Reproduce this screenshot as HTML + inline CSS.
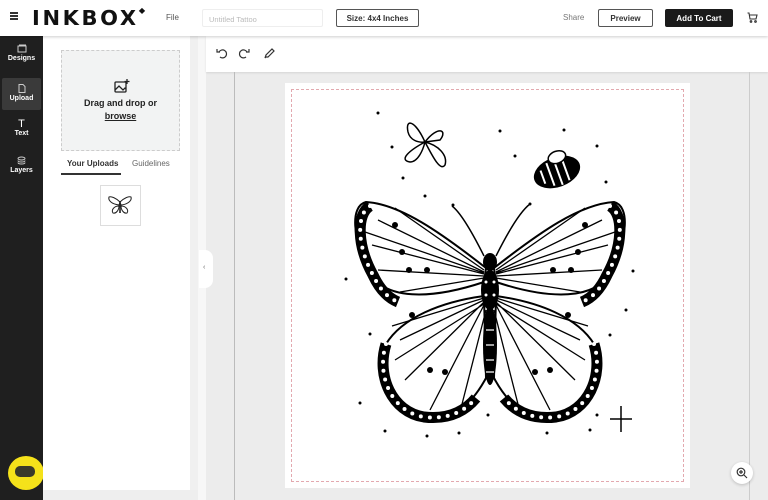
<!DOCTYPE html>
<html><head><style>
*{margin:0;padding:0;box-sizing:border-box}
body{width:768px;height:500px;overflow:hidden;font-family:"Liberation Sans",sans-serif;background:#ececec;position:relative}
.hdr{position:absolute;left:0;top:0;width:768px;height:36px;background:#fff;box-shadow:0 1px 3px rgba(0,0,0,.2);z-index:5}
.abs{position:absolute}
.side{position:absolute;left:0;top:36px;width:43px;height:464px;background:#1f1f1f}
.si{position:absolute;left:2px;width:39px;height:32px;color:#fff;font-size:7px;font-weight:bold;text-align:center}
.panel{position:absolute;left:43px;top:36px;width:147px;height:464px;background:#fff}
.btn{position:absolute;font-size:8px;font-weight:bold;text-align:center;border-radius:2px}
</style></head><body>
<div class="hdr">
 <div class="abs" style="left:10px;top:12px;width:8px;height:1.5px;background:#333;box-shadow:0 3px 0 #333,0 6px 0 #333"></div>
 <div class="abs" style="left:32px;top:6px;font-size:20px;font-weight:900;letter-spacing:2.5px;color:#111;font-family:'DejaVu Sans',sans-serif;transform:scaleX(1.05);transform-origin:left">INKBOX<span style="font-size:8px;vertical-align:top">◆</span></div>
 <div class="abs" style="left:166px;top:13px;font-size:8px;color:#555">File</div>
 <div class="abs" style="left:202px;top:9px;width:121px;height:18px;border:1px solid #eee;border-radius:2px;font-size:7.5px;color:#bbb;padding:5px 6px">Untitled Tattoo</div>
 <div class="btn" style="left:336px;top:9px;width:83px;height:18px;border:1px solid #555;padding-top:4px;color:#333">Size: 4x4 Inches</div>
 <div class="abs" style="left:563px;top:13px;font-size:8px;color:#777">Share</div>
 <div class="btn" style="left:598px;top:9px;width:55px;height:18px;border:1px solid #555;padding-top:4px;color:#333">Preview</div>
 <div class="btn" style="left:665px;top:9px;width:68px;height:18px;background:#1a1a1a;color:#fff;padding-top:5px">Add To Cart</div>
 <svg class="abs" style="left:747px;top:12px" width="11" height="11" viewBox="0 0 11 11" fill="none" stroke="#333" stroke-width="1.1"><path d="M0.5 1H2L3 7H9L10 3H2.5"/><circle cx="4" cy="9.5" r=".8"/><circle cx="8.5" cy="9.5" r=".8"/></svg>
</div>
<div class="side">
 <div class="si" style="top:8px"><svg width="10" height="9" viewBox="0 0 10 9" fill="none" stroke="#ccc"><rect x="1" y="2" width="8" height="6"/><path d="M2 1H9"/></svg><br>Designs</div>
 <div class="si" style="top:42px;background:#3a3a3a;border-radius:2px;padding-top:6px"><svg width="8" height="9" viewBox="0 0 8 9" fill="none" stroke="#ccc"><path d="M1 .5H5L7 2.5V8.5H1Z"/></svg><br>Upload</div>
 <div class="si" style="top:82px;font-size:7px"><span style="font-size:11px;font-weight:normal">T</span><br>Text</div>
 <div class="si" style="top:120px"><svg width="9" height="9" viewBox="0 0 9 9" fill="none" stroke="#ccc"><ellipse cx="4.5" cy="2.5" rx="3.5" ry="1.5"/><path d="M1 4.5c0 2 7 2 7 0M1 6.5c0 2 7 2 7 0"/></svg><br>Layers</div>
 <div class="abs" style="left:8px;top:420px;width:36px;height:34px;border-radius:50%;background:#f5e21a"></div>
 <div class="abs" style="left:15px;top:430px;width:20px;height:11px;border-radius:5px;background:#3a3a2a"></div>
</div>
<div class="panel">
 <div class="abs" style="left:18px;top:14px;width:119px;height:101px;background:#f2f3f3;border:1px dashed #ccc"></div>
 <svg class="abs" style="left:71px;top:43px" width="16" height="15" viewBox="0 0 16 15" fill="none" stroke="#222" stroke-width="1.3"><rect x="1" y="3" width="11" height="10" rx="1"/><path d="M1 11l4-4 4 4 2-2 1 1M13 0v5M10.5 2.5h5"/></svg>
 <div class="abs" style="left:18px;top:61px;width:119px;text-align:center;font-size:9px;font-weight:bold;color:#222;line-height:13px">Drag and drop or<br><u>browse</u></div>
 <div class="abs" style="left:24px;top:123px;font-size:8px;font-weight:bold;color:#333">Your Uploads</div>
 <div class="abs" style="left:18px;top:137px;width:60px;height:1.5px;background:#333"></div>
 <div class="abs" style="left:89px;top:123px;font-size:8px;color:#666">Guidelines</div>
 <div class="abs" style="left:57px;top:149px;width:41px;height:41px;border:1px solid #ddd;background:#fff"></div>
 <svg class="abs" style="left:64px;top:158px" width="26" height="22" viewBox="0 0 26 22" fill="none" stroke="#222" stroke-width="1"><path d="M13 8C9 4 4 2 2 3 1 6 4 10 12 11ZM13 8C17 4 22 2 24 3 25 6 22 10 14 11ZM12 12C7 12 4 16 6 19 9 20 12 16 12 12ZM14 12C19 12 22 16 20 19 17 20 14 16 14 12Z"/><path d="M13 7V19" stroke-width="1.6"/></svg>
</div>
<div class="abs" style="left:190px;top:36px;width:8px;height:464px;background:#f0f0f0"></div>
<div class="abs" style="left:43px;top:490px;width:155px;height:10px;background:#eee"></div>
<div class="abs" style="left:198px;top:36px;width:8px;height:464px;background:#f7f7f7"></div>
<div class="abs" style="left:199px;top:250px;width:14px;height:38px;background:#fff;border-radius:0 8px 8px 0;font-size:7px;color:#666;padding:14px 0 0 4px">‹</div>
<div class="abs" style="left:206px;top:36px;width:562px;height:36px;background:#fff;box-shadow:0 1px 2px rgba(0,0,0,.1)">
 <svg class="abs" style="left:10px;top:12px" width="62" height="11" viewBox="0 0 62 11" fill="none" stroke="#333" stroke-width="1.2"><path d="M3 4A4 4 0 1 1 4 9M1 1V4H4"/><path d="M31 4A4 4 0 1 0 30 9M33 1V4H30"/><path d="M50 9L49 10L50 7L56 1L58 3L52 9Z"/></svg>
</div>
<div class="abs" style="left:234px;top:72px;width:1px;height:428px;background:#bbb"></div>
<div class="abs" style="left:749px;top:72px;width:1px;height:428px;background:#ccc"></div>
<div class="abs" style="left:285px;top:83px;width:405px;height:405px;background:#fff"></div>
<div class="abs" style="left:291px;top:89px;width:393px;height:393px;border:1px dashed #e3a9af"></div>
<div class="abs" style="left:731px;top:462px;width:22px;height:22px;border-radius:50%;background:#fff;box-shadow:0 1px 3px rgba(0,0,0,.2)"></div>
<svg class="abs" style="left:736px;top:467px" width="12" height="12" viewBox="0 0 12 12" fill="none" stroke="#333" stroke-width="1.2"><circle cx="5" cy="5" r="3.8"/><path d="M8 8L11 11M5 3V7M3 5H7"/></svg>
<svg class="abs" style="left:0;top:0" width="768" height="500" viewBox="0 0 768 500">
<g id="wl" fill="#fff" stroke="#000" stroke-width="2">
 <path d="M486,268 C440,232 400,204 366,202 C350,206 352,238 370,272 C384,300 430,300 484,282 Z"/>
 <path d="M370,206 C356,214 357,246 373,275 C380,290 388,298 398,302" stroke-width="11" fill="none"/>
 <path d="M370,206 C356,214 357,246 373,275 C380,290 388,298 398,302" stroke="#fff" stroke-width="4" stroke-dasharray="0 9" stroke-linecap="round" fill="none"/>
 <path d="M484,296 C440,302 402,318 386,344 C374,376 390,412 422,419 C452,423 472,404 486,378 Z"/>
 <path d="M386,344 C376,376 392,412 424,417 C450,420 466,410 476,398" stroke-width="11" fill="none"/>
 <path d="M386,344 C376,376 392,412 424,417 C450,420 466,410 476,398" stroke="#fff" stroke-width="4" stroke-dasharray="0 9" stroke-linecap="round" fill="none"/>
 <g stroke-width="1.3" fill="none"><path d="M484,272 L378,220M484,274 L372,245M484,276 L378,270M484,278 L400,292M484,270 L395,208M484,273 L365,232"/><path d="M484,300 L400,340M484,302 L405,380M484,305 L430,410M486,310 L460,412M484,298 L392,326M484,304 L395,360"/></g>
 <g fill="#000" stroke="none"><circle cx="395" cy="225" r="3"/><circle cx="402" cy="252" r="3"/><circle cx="427" cy="270" r="3"/><circle cx="409" cy="270" r="3"/><circle cx="412" cy="315" r="3"/><circle cx="430" cy="370" r="3"/><circle cx="445" cy="372" r="3"/></g>
</g>
<use href="#wl" transform="translate(980,0) scale(-1,1)"/>
<path d="M484,256 C470,228 460,212 452,206M496,256 C510,228 522,210 530,204" stroke="#000" stroke-width="1.5" fill="none"/>
<ellipse cx="490" cy="262" rx="7" ry="9" fill="#000"/>
<ellipse cx="490" cy="290" rx="9" ry="20" fill="#000"/>
<ellipse cx="490" cy="345" rx="7" ry="40" fill="#000"/>
<g stroke="#fff" stroke-width="1.2"><path d="M486,330h8M486,345h8M486,360h8M486,372h8"/></g>
<g fill="#fff"><circle cx="486" cy="282" r="1.5"/><circle cx="494" cy="282" r="1.5"/><circle cx="486" cy="295" r="1.5"/><circle cx="494" cy="295" r="1.5"/></g>
<g fill="#fff" stroke="#000" stroke-width="1.5"><path d="M425,142 C415,120 405,118 408,132 C410,140 418,143 425,142Z"/><path d="M425,142 C438,125 448,130 440,140Z"/><path d="M425,142 C410,150 398,160 410,162 C418,162 423,150 425,142Z"/><path d="M425,142 C432,155 440,172 445,165 C448,155 438,145 425,142Z"/></g>
<g transform="rotate(-20 557 172)"><ellipse cx="557" cy="172" rx="24" ry="15" fill="#000"/><path d="M542,165v14M550,160v24M558,158v28M566,160v24" stroke="#fff" stroke-width="2"/><ellipse cx="562" cy="158" rx="9" ry="6" fill="#fff" stroke="#000" stroke-width="1.5"/></g>
<g fill="#000"><circle cx="378" cy="113" r="1.5"/><circle cx="392" cy="147" r="1.5"/><circle cx="403" cy="178" r="1.5"/><circle cx="500" cy="131" r="1.5"/><circle cx="564" cy="130" r="1.5"/><circle cx="597" cy="146" r="1.5"/><circle cx="515" cy="156" r="1.5"/><circle cx="425" cy="196" r="1.5"/><circle cx="453" cy="205" r="1.5"/><circle cx="530" cy="204" r="1.5"/><circle cx="606" cy="182" r="1.5"/><circle cx="346" cy="279" r="1.5"/><circle cx="633" cy="271" r="1.5"/><circle cx="626" cy="310" r="1.5"/><circle cx="370" cy="334" r="1.5"/><circle cx="610" cy="335" r="1.5"/><circle cx="360" cy="403" r="1.5"/><circle cx="385" cy="431" r="1.5"/><circle cx="427" cy="436" r="1.5"/><circle cx="459" cy="433" r="1.5"/><circle cx="547" cy="433" r="1.5"/><circle cx="590" cy="430" r="1.5"/><circle cx="488" cy="415" r="1.5"/><circle cx="597" cy="415" r="1.5"/></g>
<path d="M621,406V432M610,419H632" stroke="#000" stroke-width="1.5"/>
</svg>
</body></html>
